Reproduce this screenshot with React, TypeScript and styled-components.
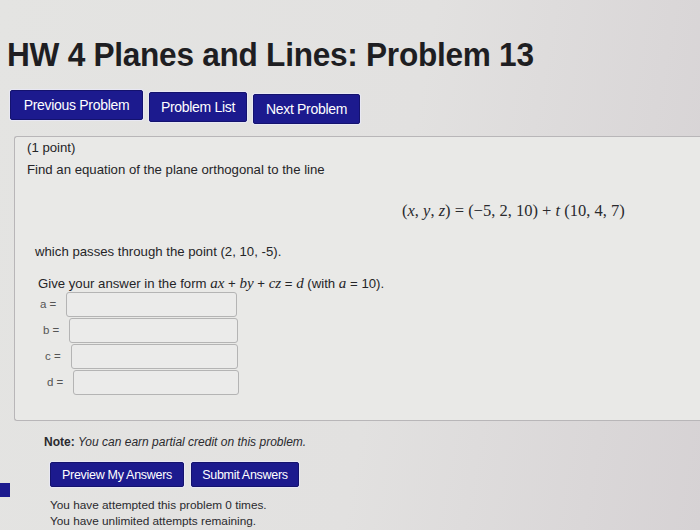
import React from "react";
import styled, { createGlobalStyle } from "styled-components";

const Global = createGlobalStyle`
  html, body { margin: 0; padding: 0; }
  body {
    width: 700px; height: 530px; overflow: hidden;
    background: linear-gradient(100deg, #e4e4e2 0%, #e2e1e0 55%, #d6d2d4 100%);
    font-family: "Liberation Sans", Arial, sans-serif;
    color: #222;
  }
`;

const Page = styled.div`
  position: relative;
  width: 700px; height: 530px;
  padding: 35px 0 0 7px;
  box-sizing: border-box;
`;

const Title = styled.h1`
  margin: 0;
  font-size: 34px;
  font-weight: 700;
  letter-spacing: -0.3px;
  color: #1e1e22;
  line-height: 38px;
  transform: scaleX(0.93);
  transform-origin: left;
  white-space: nowrap;
`;

const NavRow = styled.div`
  display: flex;
  gap: 6px;
  margin: 17px 0 0 3px;
  align-items: flex-start;
`;

const BlueButton = styled.button<{ $drop?: number; $w?: number; $h?: number; $fs?: number }>`
  background: #1c1a8e;
  color: #fff;
  border: 1px solid #14126e;
  border-radius: 2px;
  font-family: "Liberation Sans", Arial, sans-serif;
  font-size: ${(p) => p.$fs ?? 14}px;
  letter-spacing: -0.3px;
  height: ${(p) => p.$h ?? 30}px;
  width: ${(p) => p.$w}px;
  padding: 0;
  margin-top: ${(p) => p.$drop ?? 0}px;
  box-shadow: 0 0 0 1px #e8e8f4;
`;

const ProblemBox = styled.div`
  margin: 12px 0 0 7px;
  height: 285px;
  border: 1px solid #b8b6b8;
  border-right: none;
  border-radius: 3px 0 0 3px;
  background: #e9e9e7;
  padding: 2px 0 0 12px;
  box-sizing: border-box;
  font-size: 13.2px;
  color: #252528;
`;

const Line = styled.div<{ $ml?: number; $mt?: number }>`
  margin-left: ${(p) => p.$ml ?? 0}px;
  margin-top: ${(p) => p.$mt ?? 0}px;
  line-height: 18px;
`;

const Equation = styled.div`
  font-family: "Liberation Serif", "Times New Roman", serif;
  font-size: 16.5px;
  margin: 22px 0 0 375px;
  color: #2a2a2e;
  i { font-style: italic; }
`;

const MathI = styled.i`
  font-family: "Liberation Serif", "Times New Roman", serif;
  font-size: 15px;
`;

const AnswerGrid = styled.div`
  display: flex;
  flex-direction: column;
  margin: -2px 0 0 13px;
`;

const AnswerRow = styled.div<{ $shift: number }>`
  display: flex;
  align-items: center;
  margin-left: ${(p) => p.$shift}px;
  height: 26px;
`;

const Label = styled.span`
  width: 26px;
  font-size: 11.5px;
  color: #555;
`;

const Input = styled.div<{ $w: number }>`
  width: ${(p) => p.$w}px;
  height: 25px;
  border: 1px solid #b4b4b4;
  border-radius: 3px;
  background: #ebebea;
  box-sizing: border-box;
`;

const Footer = styled.div`
  margin: 14px 0 0 37px;
  font-size: 12px;
  color: #2a2a2e;
`;

const Note = styled.div`
  b { font-weight: 700; }
  i { font-style: italic; }
`;

const ActionRow = styled.div`
  display: flex;
  gap: 7px;
  margin: 13px 0 0 6px;
`;

const Status = styled.div`
  margin: 10px 0 0 6px;
  line-height: 16px;
  font-size: 11.8px;
`;

const EdgeTab = styled.div`
  position: absolute;
  left: 0;
  top: 483px;
  width: 10px;
  height: 14px;
  background: #1c1a8e;
`;

export default function App() {
  return (
    <>
      <Global />
      <Page>
        <Title>HW 4 Planes and Lines: Problem 13</Title>
        <NavRow>
          <BlueButton $w={133}>Previous Problem</BlueButton>
          <BlueButton $w={98} $drop={2}>Problem List</BlueButton>
          <BlueButton $w={107} $drop={4}>Next Problem</BlueButton>
        </NavRow>
        <ProblemBox>
          <Line>(1 point)</Line>
          <Line $mt={4}>Find an equation of the plane orthogonal to the line</Line>
          <Equation>
            (<i>x</i>, <i>y</i>, <i>z</i>) = (−5, 2, 10) + <i>t</i> (10, 4, 7)
          </Equation>
          <Line $ml={8} $mt={22}>which passes through the point (2, 10, -5).</Line>
          <Line $ml={11} $mt={13}>
            Give your answer in the form <MathI>ax</MathI> + <MathI>by</MathI> + <MathI>cz</MathI> = <MathI>d</MathI> (with <MathI>a</MathI> = 10).
          </Line>
          <AnswerGrid>
            <AnswerRow $shift={0}><Label>a =</Label><Input $w={171} /></AnswerRow>
            <AnswerRow $shift={3}><Label>b =</Label><Input $w={169} /></AnswerRow>
            <AnswerRow $shift={5}><Label>c =</Label><Input $w={167} /></AnswerRow>
            <AnswerRow $shift={7}><Label>d =</Label><Input $w={166} /></AnswerRow>
          </AnswerGrid>
        </ProblemBox>
        <Footer>
          <Note><b>Note:</b> <i>You can earn partial credit on this problem.</i></Note>
          <ActionRow>
            <BlueButton $w={134} $h={25} $fs={12.5}>Preview My Answers</BlueButton>
            <BlueButton $w={108} $h={25} $fs={12.5}>Submit Answers</BlueButton>
          </ActionRow>
          <Status>
            You have attempted this problem 0 times.<br />
            You have unlimited attempts remaining.
          </Status>
        </Footer>
        <EdgeTab />
      </Page>
    </>
  );
}
